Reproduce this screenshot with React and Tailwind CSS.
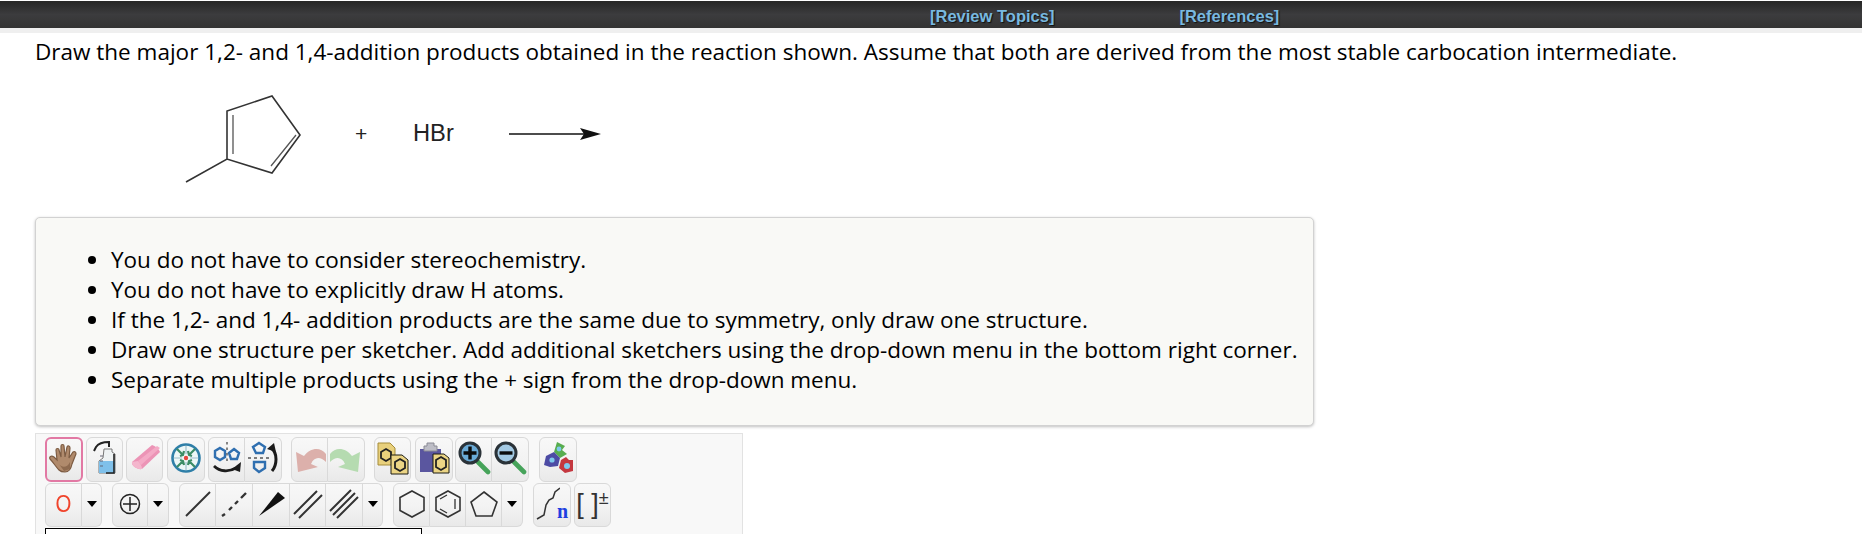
import React from 'react';

const btn =
  'flex items-center justify-center h-full pb-[3px] border border-[#d9d9d9] bg-gradient-to-b from-[#f8f8f8] via-[#f3f3f3] to-[#e9e9e9] shrink-0';

// joined buttons share a border, only the outer corners are rounded
function Group({ widths, children, className = '' }) {
  const items = React.Children.toArray(children);
  return (
    <div className={`flex h-full ${className}`}>
      {items.map((item, i) => (
        <div
          key={i}
          style={{ width: widths[i] }}
          className={`${btn} ${i > 0 ? 'border-l-0' : 'rounded-l-[6px]'} ${i === items.length - 1 ? 'rounded-r-[6px]' : ''}`}
        >
          {item}
        </div>
      ))}
    </div>
  );
}

const Caret = () => <div className="w-0 h-0 border-x-[5.5px] border-x-transparent border-t-[6px] border-t-black" />;

const Hand = () => (
  <svg width="30" height="32" viewBox="0 0 30 32">
    <path d="M10 28 C7 25 4 20 1 17 C0 15 2 13 5 15 L8 18 L7 8 C7 6 10 6 10 8 L12 15 L12 4 C12 2 15 2 15 4 L16 15 L18 5 C19 3 21 4 21 6 L20 16 L24 10 C26 9 27 10 27 12 L23 22 C22 27 20 30 16 30 C13 30 11 29 10 28 Z" fill="#b08a6c" stroke="#7c5b42" strokeWidth="1.2" />
    <path d="M10 22 C13 26 18 26 21 20 V27 L15 29 Z" fill="#8e6a4f" />
  </svg>
);

const Bottle = () => (
  <svg width="24" height="36" viewBox="0 0 24 36">
    <path d="M1 11 L3 7 C5 4 10 2 16 2 L16 7" fill="none" stroke="#222" strokeWidth="2" />
    <path d="M11 9 h8 v3 l3 2 v19 h-16 v-12 l4 -3 z" fill="#eef2f3" stroke="#777" strokeWidth="1" />
    <path d="M6 21 h16 v12 h-16 z" fill="#7fc0ea" />
    <path d="M21 14 v19 h-8" fill="none" stroke="#222" strokeWidth="1.6" />
    <path d="M7 16 h3 M7 21 h3 M7 26 h3" stroke="#667" strokeWidth="1" />
  </svg>
);

const Eraser = () => (
  <svg width="32" height="30" viewBox="0 0 32 30">
    <path d="M3 19 L23 2 C26 3 30 6 31 9 L13 26 C9 27 2 23 3 19 Z" fill="#ec94b6" />
    <path d="M3 19 L9 18 C11 20 13 23 13 26 C9 27 2 23 3 19 Z" fill="#f4b6cd" />
    <path d="M9 18 L28 3 L31 5 L12 22 Z" fill="#f4aac6" />
  </svg>
);

const Center = () => (
  <svg width="32" height="32" viewBox="0 0 32 32">
    <circle cx="16" cy="16" r="13.5" fill="#edf7f7" stroke="#2f7fa8" strokeWidth="2.6" />
    <path d="M16 4 V12 M16 20 V28 M4 16 H12 M20 16 H28" stroke="#9fc0cc" strokeWidth="1.2" />
    <path d="M7 7 L13 13 M25 7 L19 13 M7 25 L13 19 M25 25 L19 19 M10 14 L13 13 L14 9 M22 14 L19 13 L18 9 M10 18 L13 19 L14 23 M22 18 L19 19 L18 23" fill="none" stroke="#3c8c66" strokeWidth="2.2" />
    <circle cx="16" cy="16" r="2.2" fill="#e8473f" />
  </svg>
);

const FlipH = () => (
  <svg width="32" height="34" viewBox="0 0 32 34">
    <path d="M9 7 L14 10 V16 L9 19 L4 16 V10 Z M23 8 L28 12 L26 18 H20 L18 12 Z" fill="none" stroke="#2f6fb0" strokeWidth="2.4" />
    <path d="M16 1 V22" stroke="#555" strokeWidth="1.4" strokeDasharray="2.5 3" />
    <path d="M3 25 C9 31 18 31 25 27" fill="none" stroke="#1c1c1c" strokeWidth="2.8" />
    <path d="M30 21 L29 31 L21 28 Z" fill="#1c1c1c" />
  </svg>
);

const FlipV = () => (
  <svg width="32" height="34" viewBox="0 0 32 34">
    <path d="M12 2 L18 6 L16 12 H9 L6 6 Z M12 31 L18 27 V21 H7 V27 Z" fill="none" stroke="#2f6fb0" strokeWidth="2.4" />
    <path d="M1 17 H23" stroke="#555" strokeWidth="1.4" strokeDasharray="3 3" />
    <path d="M24 7 C31 12 30 24 25 30" fill="none" stroke="#1c1c1c" strokeWidth="3" />
    <path d="M20 8 L27 2 L29 11 Z" fill="#1c1c1c" />
  </svg>
);

const Undo = () => (
  <svg width="32" height="32" viewBox="0 0 32 32">
    <path d="M4 30 L2 10 L10 14 C16 6 26 4 32 12 L32 20 C26 14 20 15 17 22 L24 25 Z" fill="#dcb0ab" />
  </svg>
);

const Redo = () => (
  <svg width="32" height="32" viewBox="0 0 32 32">
    <path d="M28 30 L30 10 L22 14 C16 6 6 4 0 12 L0 20 C6 14 12 15 15 22 L8 25 Z" fill="#b5dbb0" />
  </svg>
);

const Copy = () => (
  <svg width="32" height="34" viewBox="0 0 32 34">
    <path d="M1 2 H13 L18 7 V24 H1 Z" fill="#e8d07c" stroke="#a58c3a" strokeWidth="1" />
    <path d="M9 8 L14 11 V17 L9 20 L4 17 V11 Z" fill="none" stroke="#222" strokeWidth="1.8" />
    <path d="M14 14 H25 L31 19 V33 H14 Z" fill="#ecd585" stroke="#1c1c14" strokeWidth="1" />
    <path d="M23 18 L28 21 V27 L23 30 L18 27 V21 Z" fill="none" stroke="#222" strokeWidth="1.8" />
  </svg>
);

const Paste = () => (
  <svg width="32" height="32" viewBox="0 0 32 32">
    <path d="M2 7 H23 V30 H2 Z" fill="#5a569f" />
    <path d="M9 1 H16 V4 H19 V9 H6 V4 H9 Z" fill="#bdbdc6" stroke="#8a8a94" strokeWidth="1" />
    <path d="M15 12 H26 L31 16 V31 H15 Z" fill="#ecd585" stroke="#1c1c14" strokeWidth="1" />
    <path d="M23 15 L28 18 V25 L23 28 L18 25 V18 Z" fill="none" stroke="#222" strokeWidth="1.8" />
  </svg>
);

const Zoom = ({ plus }) => (
  <svg width="34" height="34" viewBox="0 0 34 34">
    <path d="M21 21 L31 31" stroke="#46a35a" strokeWidth="4.6" strokeLinecap="round" />
    <circle cx="13" cy="12" r="10" fill={plus ? '#6aaad6' : '#a3c9e3'} stroke="#2a3238" strokeWidth="3" />
    <path d={plus ? 'M6.5 12 H19.5 M13 5.5 V18.5' : 'M6.5 12 H19.5'} stroke="#0c0c0c" strokeWidth="3.4" />
  </svg>
);

const Clean = () => (
  <svg width="32" height="34" viewBox="0 0 32 34">
    <path d="M15 1 L23 5 L20 9 L25 13 L18 17 L12 11 Z" fill="#58ad4f" />
    <path d="M4 15 L12 11 L18 17 L16 25 L8 26 L2 24 Z" fill="#4d4ba4" />
    <path d="M19 19 L24 16 L27 19 L31 19 L31 30 L23 32 L17 27 Z" fill="#c4373f" />
    <circle cx="10" cy="19" r="2.6" fill="#7fc8ee" />
    <circle cx="25" cy="25" r="3" fill="#7fc8ee" />
    <circle cx="17" cy="8" r="2.4" fill="#7fc8ee" />
  </svg>
);

const Plus = () => (
  <svg width="22" height="22" viewBox="0 0 22 22">
    <circle cx="11" cy="11" r="9.5" fill="none" stroke="#222" strokeWidth="1.5" />
    <path d="M4 11 H18 M11 4 V18" stroke="#222" strokeWidth="1.5" />
  </svg>
);

const Bond = ({ d, w = 2 }) => (
  <svg width="30" height="30" viewBox="0 0 30 30">
    <path d={d} stroke="#333" strokeWidth={w} fill="none" />
  </svg>
);

const Wedge = () => (
  <svg width="30" height="30" viewBox="0 0 30 30">
    <path d="M3 27 L22 3 L29 9 Z" fill="#111" />
  </svg>
);

const Hexagon = ({ inner }) => (
  <svg width="28" height="30" viewBox="0 0 28 30">
    <path d="M14 2 L26 8.5 V21.5 L14 28 L2 21.5 V8.5 Z" fill="none" stroke="#333" strokeWidth="1.6" />
    {inner && <path d="M21 10 V20 M6 10 L13 6 M6 20 L13 24" fill="none" stroke="#333" strokeWidth="1.3" />}
  </svg>
);

const Pentagon = () => (
  <svg width="30" height="30" viewBox="0 0 30 30">
    <path d="M15 3 L28 13 L23 27 H7 L2 13 Z" fill="none" stroke="#333" strokeWidth="1.6" />
  </svg>
);

const Chain = () => (
  <div className="relative w-[32px] h-[36px]">
    <svg width="24" height="36" viewBox="0 0 24 36" className="absolute left-0 top-0">
      <path d="M1 33 L8 29 L10 19 L13 14 L17 12 L19 6 L24 2" fill="none" stroke="#333" strokeWidth="1.5" />
    </svg>
    <span className="absolute right-0 bottom-[1px] text-[20px] leading-none font-bold text-[#1f3fe0] font-['Liberation_Serif',serif]">n</span>
  </div>
);

const Brackets = () => (
  <div className="flex items-start font-['Liberation_Sans',sans-serif] text-[#333]">
    <span className="text-[27px] leading-[32px]">[ ]</span>
    <span className="text-[18px] leading-[20px]">±</span>
  </div>
);

export default function App() {
  const notes = [
    'You do not have to consider stereochemistry.',
    'You do not have to explicitly draw H atoms.',
    'If the 1,2- and 1,4- addition products are the same due to symmetry, only draw one structure.',
    'Draw one structure per sketcher. Add additional sketchers using the drop-down menu in the bottom right corner.',
    'Separate multiple products using the + sign from the drop-down menu.',
  ];

  return (
    <div className="w-[1862px] h-[534px] overflow-hidden bg-white text-black font-['Open_Sans',sans-serif]">
      <div className="mt-px h-[27px] flex items-center bg-gradient-to-b from-[#262626] via-[#3c3c3e] to-[#333333] pl-[930px] pt-[3px] gap-[125px] font-['Liberation_Sans',sans-serif] font-bold text-[16.5px] text-[#78b9e0] [text-shadow:1px_1px_1px_#111]">
        <span>[Review Topics]</span>
        <span>[References]</span>
      </div>
      <div className="h-[5px] bg-[#efefef]" />

      <div className="px-[35px]">
        <p className="mt-[4px] text-[22.5px] leading-[30px] whitespace-nowrap">
          Draw the major 1,2- and 1,4-addition products obtained in the reaction shown. Assume that both are derived from the most stable carbocation intermediate.
        </p>

        <div className="flex items-start h-[150px] pl-[150px] font-['Liberation_Sans',sans-serif] text-[#222]">
          <svg width="120" height="100" viewBox="185 90 120 100" className="mt-[23px] blur-[0.3px]">
            <path d="M186 182 L227 159 L272 173 L300 135 L272 96 L227 111 L227 159" fill="none" stroke="#333" strokeWidth="1.6" />
            <path d="M233 115 V154 M271 166 L296 135" fill="none" stroke="#555" strokeWidth="1.3" />
          </svg>
          <span className="ml-[50px] mt-[52px] text-[21px] leading-[30px] w-[58px]">+</span>
          <span className="mt-[51px] text-[23.7px] leading-[30px] w-[96px]">HBr</span>
          <svg width="92" height="14" viewBox="0 0 92 14" className="mt-[60px]">
            <path d="M0 7 H80" stroke="#111" strokeWidth="1.4" />
            <path d="M71 1 L92 7 L71 13 L75 7 Z" fill="#111" />
          </svg>
        </div>

        <div className="w-[1279px] h-[209px] rounded-[5px] border border-[#d2d2d2] bg-[#f9f9f6] shadow-[0_1px_3px_rgba(0,0,0,0.25)] pt-[27px] pl-[75px]">
          <ul className="list-disc text-[22.5px] leading-[30.1px] whitespace-nowrap">
            {notes.map((note) => (
              <li key={note}>{note}</li>
            ))}
          </ul>
        </div>

        <div className="mt-[7px] w-[708px] h-[110px] border border-[#e2e2e2] bg-[#f8f8f8] pl-[9px] pt-[3px] [&_svg]:blur-[0.4px]">
          <div className="flex h-[45px]">
            <div className={`${btn} w-[38px] rounded-[6px] border-[2px] border-[#e279a4]`}><Hand /></div>
            <Group widths={[37]} className="ml-[3px]"><Bottle /></Group>
            <Group widths={[37]} className="ml-[3px]"><Eraser /></Group>
            <Group widths={[38]} className="ml-[4px]"><Center /></Group>
            <Group widths={[37, 37]} className="ml-[3px]"><FlipH /><FlipV /></Group>
            <Group widths={[37, 37]} className="ml-[9px]"><Undo /><Redo /></Group>
            <Group widths={[37]} className="ml-[9px]"><Copy /></Group>
            <Group widths={[38]} className="ml-[4px]"><Paste /></Group>
            <Group widths={[37, 37]} className="ml-[2px]"><Zoom plus /><Zoom /></Group>
            <Group widths={[38]} className="ml-[10px]"><Clean /></Group>
          </div>
          <div className="flex h-[44px] mt-px">
            <Group widths={[37, 20]}>
              <span className="text-[24px] leading-none text-[#f0442c] font-['Liberation_Sans',sans-serif] scale-x-[0.85]">O</span>
              <Caret />
            </Group>
            <Group widths={[36, 21]} className="ml-[10px]"><Plus /><Caret /></Group>
            <Group widths={[37, 37, 37, 36, 37, 20]} className="ml-[10px]">
              <Bond d="M3 27 L27 3" />
              <Bond d="M3 27 L6 25 M10 21 L13 18 M16 15 L19 12 M22 9 L27 4" w={2.4} />
              <Wedge />
              <Bond d="M1 25 L24 2 M6 29 L29 6" />
              <Bond d="M1 22 L22 1 M4 26 L26 4 M8 29 L29 8" />
              <Caret />
            </Group>
            <Group widths={[37, 36, 36, 21]} className="ml-[10px]">
              <Hexagon />
              <Hexagon inner />
              <Pentagon />
              <Caret />
            </Group>
            <Group widths={[38]} className="ml-[10px]"><Chain /></Group>
            <Group widths={[37]} className="ml-[3px]"><Brackets /></Group>
          </div>
          <div className="mt-px w-[377px] h-[20px] border border-black bg-white" />
        </div>
      </div>
    </div>
  );
}
